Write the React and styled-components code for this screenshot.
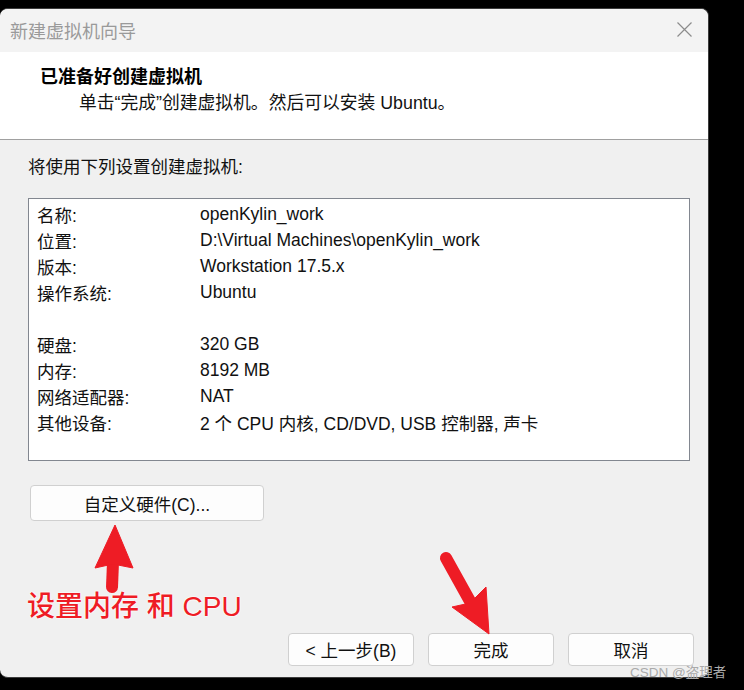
import React from 'react';
import styled, { createGlobalStyle } from 'styled-components';

const Global = createGlobalStyle`
  html, body {
    margin: 0;
    padding: 0;
    background: #000;
  }
  body {
    font-family: "Liberation Sans", "Noto Sans CJK SC", sans-serif;
  }
`

const Page = styled.div`
  position: relative;
  width: 744px;
  height: 690px;
  padding-top: 8px;
  box-sizing: border-box;
  overflow: hidden;
`

const Dialog = styled.div`
  width: 709px;
  height: 670px;
  box-sizing: border-box;
  border: 1px solid #3c3c3c;
  border-left: none;
  border-radius: 8px;
  background: #f0f0f0;
  overflow: hidden;
  display: flex;
  flex-direction: column;
`

const TitleBar = styled.div`
  height: 43px;
  flex-shrink: 0;
  background: #f3f3f3;
  display: flex;
  align-items: center;
  justify-content: space-between;
  padding: 0 16px 2px 10px;
  box-sizing: border-box;
`

const Title = styled.span`
  font-size: 18px;
  color: #9a9a9a;
  font-family: "Noto Sans CJK SC", sans-serif;
`

const Close = styled.svg`
  width: 15px;
  height: 15px;
  display: block;
`

const Header = styled.div`
  background: #fff;
  height: 88px;
  flex-shrink: 0;
  box-sizing: border-box;
  padding-top: 10px;
  border-bottom: 1px solid #a0a0a0;
`

const HeaderTitle = styled.div`
  padding-left: 40px;
  font-family: "Noto Sans CJK SC", sans-serif;
  font-weight: 700;
  font-size: 18px;
  line-height: 26px;
  color: #000;
`

const HeaderSub = styled.div`
  padding-left: 79px;
  margin-top: 2px;
  font-size: 17.8px;
  line-height: 26px;
  color: #111;
`

const Body = styled.div`
  flex: 1;
  display: flex;
  flex-direction: column;
  padding: 14px 14px 11px 28px;
`

const Lead = styled.div`
  font-size: 17.5px;
  line-height: 26px;
  color: #111;
`

const SummaryBox = styled.div`
  margin-top: 18px;
  width: 662px;
  height: 263px;
  box-sizing: border-box;
  background: #fff;
  border: 1px solid #828790;
  padding: 2px 0 0 8px;
  display: grid;
  grid-template-columns: 163px 1fr;
  grid-auto-rows: 26px;
  align-items: center;
  font-size: 17.5px;
  color: #111;
`

const Cell = styled.div`
  white-space: nowrap;
`

const Button = styled.button`
  font-family: "Liberation Sans", "Noto Sans CJK SC", sans-serif;
  font-size: 17.5px;
  color: #111;
  background: #fdfdfd;
  border: 1px solid #d0d0d0;
  border-radius: 4px;
  width: ${p => p.$w || 126}px;
  height: ${p => p.$h || 33}px;
  padding: 0;
  display: flex;
  align-items: center;
  justify-content: center;
`

const CustomRow = styled.div`
  margin-top: 24px;
  padding-left: 2px;
`

const Footer = styled.div`
  margin-top: auto;
  display: flex;
  justify-content: flex-end;
  gap: 14px;
`

const Note = styled.div`
  position: absolute;
  left: 27px;
  top: 588px;
  font-family: "Liberation Sans", "Noto Sans CJK SC", sans-serif;
  font-weight: 500;
  font-size: 28px;
  line-height: 38px;
  color: #ee1c25;
  text-shadow: 0 0 1px #fff, 0 0 2px #fff, 0 0 2px #fff;
  white-space: nowrap;
`

const Overlay = styled.svg`
  position: absolute;
  left: 0;
  top: 0;
  pointer-events: none;
`

const Watermark = styled.div`
  position: absolute;
  left: 630px;
  top: 664px;
  font-family: "Liberation Sans", "Noto Sans CJK SC", sans-serif;
  font-size: 13.5px;
  line-height: 18px;
  color: #aaa;
  white-space: nowrap;
`

const rows = [
  ['名称:', 'openKylin_work'],
  ['位置:', 'D:\\Virtual Machines\\openKylin_work'],
  ['版本:', 'Workstation 17.5.x'],
  ['操作系统:', 'Ubuntu'],
  ['', ''],
  ['硬盘:', '320 GB'],
  ['内存:', '8192 MB'],
  ['网络适配器:', 'NAT'],
  ['其他设备:', '2 个 CPU 内核, CD/DVD, USB 控制器, 声卡'],
]

const App = () => {
  return (
    <Page>
      <Global />
      <Dialog>
        <TitleBar>
          <Title>新建虚拟机向导</Title>
          <Close viewBox="0 0 15 15">
            <path d="M0.5 0.5 L14.5 14.5 M14.5 0.5 L0.5 14.5" stroke="#8c8c8c" strokeWidth="1.2" fill="none" />
          </Close>
        </TitleBar>
        <Header>
          <HeaderTitle>已准备好创建虚拟机</HeaderTitle>
          <HeaderSub>单击“完成”创建虚拟机。然后可以安装 Ubuntu。</HeaderSub>
        </Header>
        <Body>
          <Lead>将使用下列设置创建虚拟机:</Lead>
          <SummaryBox>
            {rows.map(([k, v], i) => (
              <React.Fragment key={i}>
                <Cell>{k}</Cell>
                <Cell>{v}</Cell>
              </React.Fragment>
            ))}
          </SummaryBox>
          <CustomRow>
            <Button $w={234} $h={36}>自定义硬件(C)...</Button>
          </CustomRow>
          <Footer>
            <Button>&lt; 上一步(B)</Button>
            <Button>完成</Button>
            <Button>取消</Button>
          </Footer>
        </Body>
      </Dialog>

      {/* annotations drawn over the dialog */}
      <Overlay width="744" height="690" viewBox="0 0 744 690">
        <g fill="#ee1c25" stroke="#ee1c25" strokeLinejoin="round">
          <line x1="113" y1="562" x2="112" y2="587" strokeWidth="12" strokeLinecap="round" />
          <polygon points="115,525 133,568 113,564 95,568" strokeWidth="1" />
          <line x1="446" y1="558" x2="471" y2="603" strokeWidth="12" strokeLinecap="round" />
          <polygon points="489,634 452,607 470,603 486,587" strokeWidth="1" />
        </g>
      </Overlay>
      <Note>设置内存 和 CPU</Note>
      <Watermark>CSDN @盗理者</Watermark>
    </Page>
  );
}

export default App
